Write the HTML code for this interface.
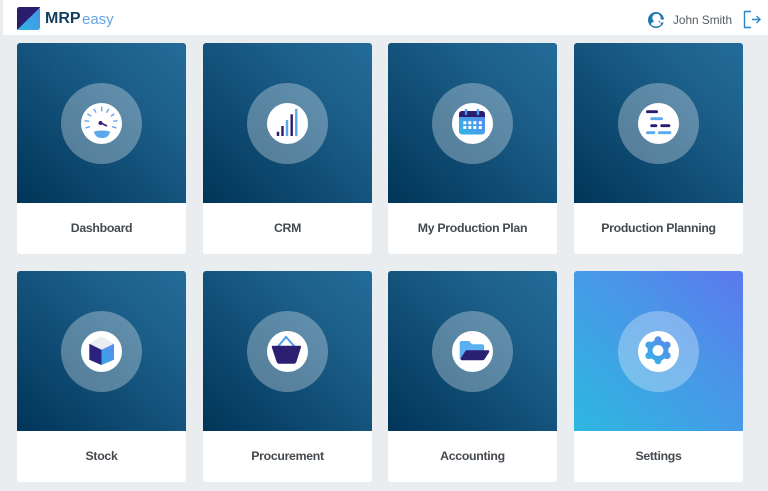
<!DOCTYPE html>
<html><head><meta charset="utf-8"><style>
html,body{margin:0;padding:0}
body{width:768px;height:491px;overflow:hidden;background:#eaedf0;position:relative;font-family:"Liberation Sans",sans-serif}
#h{position:absolute;left:3px;top:0;width:765px;height:35px;background:#fff}
.c{position:absolute;width:169px;height:211px;background:#fff;border-radius:3px;overflow:hidden}
.g{position:absolute;left:0;top:0;width:169px;height:160px;background:linear-gradient(to top right,#003558 0%,#1c5f8a 70%,#236c9a 100%)}
.s .g{background:linear-gradient(to top right,#2db8e0 0%,#4a95e8 60%,#5c78ee 100%)}
.o{position:absolute;left:44px;top:40px;width:81px;height:81px;border-radius:50%;background:rgba(255,255,255,.3)}
.i{position:absolute;left:64px;top:60px;width:41px;height:41px;border-radius:50%;background:#fff}
.i svg{display:block;width:41px;height:41px}
.l{position:absolute;left:0;top:160px;width:169px;height:51px;line-height:51px;text-align:center;font-size:12.3px;letter-spacing:-.3px;font-weight:bold;color:#444a50}
</style></head><body>
<div id="h"></div>
<svg style="position:absolute;left:17px;top:7px" width="23" height="23" viewBox="0 0 23 23"><defs><linearGradient id="lb" x1="0" y1="1" x2="1" y2="0"><stop offset="0" stop-color="#2fb4e4"/><stop offset="1" stop-color="#4a90e6"/></linearGradient></defs><rect width="23" height="23" rx="2.5" fill="url(#lb)"/><path d="M2.5 0H23V.5L0 23V2.500A2.500 2.500 0 0 1 2.500 0Z" fill="#2b1d6e"/></svg>
<div style="position:absolute;left:45px;top:10px;font-size:16px;line-height:18px;font-weight:bold;color:#123f5c">MRP</div>
<div style="position:absolute;left:82px;top:11px;font-size:15px;line-height:18px;color:#62a6e8">easy</div>
<svg style="position:absolute;left:647px;top:11px" width="18" height="18" viewBox="0 0 18 18"><circle cx="9" cy="9" r="8" fill="#1b78b4"/><circle cx="9.500" cy="7" r="4.200" fill="#fff"/><ellipse cx="9" cy="13" rx="5" ry="2.500" fill="#fff"/><path d="M13 8.500h5v3h-5z" fill="#fff"/></svg>
<div style="position:absolute;left:673px;top:13px;font-size:11.8px;line-height:14px;color:#555c63">John Smith</div>
<svg style="position:absolute;left:743px;top:10px" width="20" height="19" viewBox="0 0 20 19"><path d="M8 1.500H1.500v16H8" fill="none" stroke="#2a86c4" stroke-width="1.400"/><path d="M9 9.500h8M13.500 6l3.500 3.500-3.500 3.500" fill="none" stroke="#2a86c4" stroke-width="1.400"/></svg>

<div class="c" style="left:17px;top:43px"><div class="g"></div><div class="o"></div><div class="i"><svg viewBox="0 0 41 41"><path stroke="#62a6ee" stroke-width="1.400" stroke-linecap="round" fill="none" d="M20.700 4.300v3.400M13.200 6.200l1.600 3M27.500 6.200l-1.600 3M6.900 11.100l2.800 1.800M33.100 11.100l-2.800 1.800M4 17.800l3.400.4M36 17.800l-3.400.4M5 24.800l3.400-1M35 24.800l-3.400-1"/><path d="M13 28.500Q21 26.500 29 28.500Q28 35 21 35Q14 35 13 28.500Z" fill="#5aa8ee"/><circle cx="19.500" cy="20" r="2" fill="#3a1d84"/><path d="M20 20l6 3" stroke="#3a1d84" stroke-width="1.600"/></svg></div><div class="l">Dashboard</div></div>

<div class="c" style="left:203px;top:43px"><div class="g"></div><div class="o"></div><div class="i"><svg viewBox="0 0 41 41"><g stroke-width="2.400"><path d="M11 33v-4.300" stroke="#2b1d6e"/><path d="M15.500 33V23" stroke="#2b1d6e"/><path d="M20 33V17" stroke="#5aa8ee"/><path d="M24.700 33V11.300" stroke="#2b1d6e"/><path d="M29.300 33V5.700" stroke="#5aa8ee"/></g></svg></div><div class="l">CRM</div></div>

<div class="c" style="left:388px;top:43px"><div class="g"></div><div class="o"></div><div class="i"><svg viewBox="0 0 41 41"><defs><linearGradient id="cal" x1="0" y1="1" x2="1" y2="0"><stop offset="0" stop-color="#33b5e6"/><stop offset="1" stop-color="#5b86ee"/></linearGradient></defs><rect x="7" y="8" width="26" height="23.500" rx="3" fill="url(#cal)"/><path d="M7 14v-3a3 3 0 0 1 3-3h20a3 3 0 0 1 3 3v3z" fill="#2b1d6e"/><path d="M14 7v4M26 7v4" stroke="#4a9cee" stroke-width="2.400" stroke-linecap="round"/><g fill="#fff"><rect x="11.300" y="18.300" width="3" height="3"/><rect x="16.300" y="18.300" width="3" height="3"/><rect x="21.300" y="18.300" width="3" height="3"/><rect x="26.800" y="18.300" width="3" height="3"/><rect x="11.300" y="23" width="3" height="3"/><rect x="16.300" y="23" width="3" height="3"/><rect x="21.300" y="23" width="3" height="3"/><rect x="26.800" y="23" width="3" height="3"/></g></svg></div><div class="l">My Production Plan</div></div>

<div class="c" style="left:574px;top:43px"><div class="g"></div><div class="o"></div><div class="i"><svg viewBox="0 0 41 41"><g fill="#2b1d6e"><rect x="8" y="7.300" width="12" height="2.800" rx="1.400"/><rect x="12.300" y="21.300" width="7" height="2.800" rx="1.400"/><rect x="22.300" y="21.300" width="10" height="2.800" rx="1.400"/></g><g fill="#5aa8ee"><rect x="12.300" y="14.300" width="12.700" height="2.800" rx="1.400"/><rect x="8" y="28.300" width="9.300" height="2.800" rx="1.400"/><rect x="20" y="28.300" width="13.300" height="2.800" rx="1.400"/></g></svg></div><div class="l">Production Planning</div></div>

<div class="c" style="left:17px;top:271px"><div class="g"></div><div class="o"></div><div class="i"><svg viewBox="0 0 41 41"><defs><linearGradient id="cr" x1="0" y1="1" x2="1" y2="0"><stop offset="0" stop-color="#33a5e6"/><stop offset="1" stop-color="#5b8cee"/></linearGradient></defs><path d="M20 5.300L33 12.700 20.500 18.700 8.300 12.700z" fill="#e9edf1"/><path d="M8.300 12.700L20.500 18.700V34L8.300 28.700z" fill="#2b2280"/><path d="M33 12.700L20.500 18.700V34L33 28.700z" fill="url(#cr)"/></svg></div><div class="l">Stock</div></div>

<div class="c" style="left:203px;top:271px"><div class="g"></div><div class="o"></div><div class="i"><svg viewBox="0 0 41 41"><path d="M11 15.500L19 6l8.500 9.500" fill="none" stroke="#4a9cee" stroke-width="2"/><path d="M6 14.700h27a1.200 1.200 0 0 1 1 1.500L29.500 30.500a3 3 0 0 1-3 2.200H12.500a3 3 0 0 1-3-2.200L4.800 16.200a1.200 1.200 0 0 1 1.200-1.500z" fill="#2b1f72"/></svg></div><div class="l">Procurement</div></div>

<div class="c" style="left:388px;top:271px"><div class="g"></div><div class="o"></div><div class="i"><svg viewBox="0 0 41 41"><path d="M7.700 12a2 2 0 0 1 2-2H17l3 3.300h10a2 2 0 0 1 2 2V20H14L8 28 7.700 27z" fill="#5ab0f0"/><path d="M15 19.300h21a1.200 1.200 0 0 1 1.200 1.700l-4.500 7a2.500 2.500 0 0 1-2.200 1.300H10a1.500 1.500 0 0 1-1.300-2.200l4.300-6.500a2.500 2.500 0 0 1 2-1.300z" fill="#2b1f72"/></svg></div><div class="l">Accounting</div></div>

<div class="c s" style="left:574px;top:271px"><div class="g"></div><div class="o"></div><div class="i"><svg viewBox="0 0 41 41"><defs><linearGradient id="gear" gradientUnits="userSpaceOnUse" x1="8" y1="33" x2="33" y2="6"><stop offset="0" stop-color="#33b5e6"/><stop offset="1" stop-color="#5b86ee"/></linearGradient></defs><g fill="url(#gear)"><circle cx="20" cy="19.300" r="10.500"/><circle cx="20" cy="8.800" r="3.500"/><circle cx="20" cy="29.800" r="3.500"/><circle cx="29.100" cy="14" r="3.500"/><circle cx="29.100" cy="24.600" r="3.500"/><circle cx="10.900" cy="14" r="3.500"/><circle cx="10.900" cy="24.600" r="3.500"/></g><circle cx="20" cy="19.500" r="5.400" fill="#fff"/></svg></div><div class="l">Settings</div></div>
</body></html>
